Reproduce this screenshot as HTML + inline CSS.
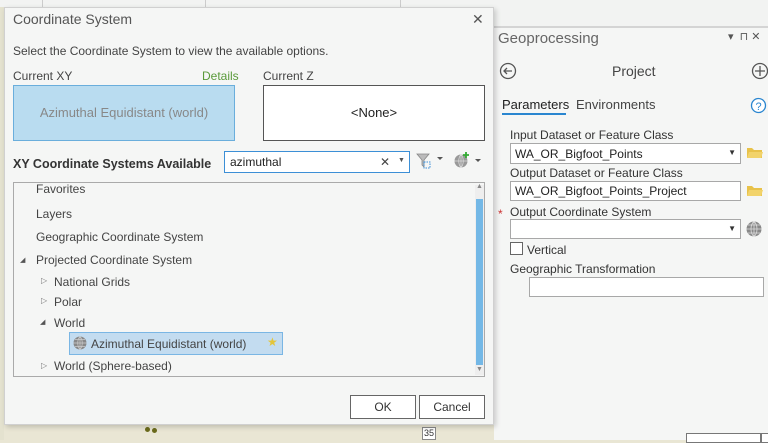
<!DOCTYPE html>
<html><head><meta charset="utf-8"><style>
*{margin:0;padding:0;box-sizing:border-box}
body{width:768px;height:440px;overflow:hidden;position:relative;background:#e9e6d4;font-family:"Liberation Sans",sans-serif;color:#333}
.a{position:absolute;white-space:nowrap}
.f12{font-size:12px}
.box{position:absolute;background:#fff;border:1px solid #a8a8a8}
</style></head><body>
<div class="a" style="left:0;top:0;width:768px;height:27px;background:#f2f3f2"></div>
<div class="a" style="left:42px;top:0;width:1px;height:7px;background:#ccc"></div>
<div class="a" style="left:205px;top:0;width:1px;height:7px;background:#ccc"></div>
<div class="a" style="left:400px;top:0;width:1px;height:7px;background:#ccc"></div>
<div class="a" style="left:0;top:7px;width:4px;height:433px;background:#e4e2cf"></div>
<div class="a" style="left:145px;top:427px;width:5px;height:5px;border-radius:50%;background:#6b6b1c"></div>
<div class="a" style="left:152px;top:428px;width:5px;height:5px;border-radius:50%;background:#6b6b1c"></div>
<div class="a" style="left:422px;top:427px;width:14px;height:13px;background:#fff;border:1px solid #888;font-size:9px;text-align:center">35</div>

<div class="a" style="left:494px;top:26px;width:274px;height:414px;background:#f5f6f5;border-top:2px solid #d4d4d4"></div>
<div class="a" style="left:498px;top:30px;font-size:15px;color:#666">Geoprocessing</div>
<div class="a" style="left:728px;top:30px;font-size:11px;color:#555">▾ &nbsp;⊓ ✕</div>
<svg class="a" style="left:499px;top:62px" width="18" height="18"><circle cx="9" cy="9" r="7.5" fill="none" stroke="#555" stroke-width="1.3"/><path d="M13 9H5M8 6L5 9L8 12" fill="none" stroke="#555" stroke-width="1.3"/></svg>
<div class="a" style="left:612px;top:63px;font-size:14px;color:#444">Project</div>
<svg class="a" style="left:751px;top:62px" width="18" height="18"><circle cx="9" cy="9" r="7.5" fill="none" stroke="#555" stroke-width="1.3"/><path d="M9 4V14M4 9H14" stroke="#555" stroke-width="1.3"/></svg>
<div class="a" style="left:502px;top:97px;font-size:13px;color:#222">Parameters</div>
<div class="a" style="left:502px;top:113px;width:64px;height:2px;background:#2a86d0"></div>
<div class="a" style="left:576px;top:97px;font-size:13px;color:#444">Environments</div>
<svg class="a" style="left:750px;top:97px" width="17" height="17"><circle cx="8.5" cy="8.5" r="7" fill="#fff" stroke="#2a86d0" stroke-width="1.3"/><text x="8.5" y="13" font-size="11" text-anchor="middle" fill="#2a86d0" font-family="Liberation Sans">?</text></svg>
<div class="a f12" style="left:510px;top:128px">Input Dataset or Feature Class</div>
<div class="box" style="left:510px;top:143px;width:231px;height:21px"><span class="a f12" style="left:4px;top:3px;color:#222">WA_OR_Bigfoot_Points</span><span class="a" style="right:4px;top:4px;font-size:8px">▼</span></div>
<svg class="a" style="left:746px;top:145px" width="18" height="14"><path d="M1 3h5l2 2h8v8H1z" fill="#e8c24a"/><path d="M3 7h14l-2 6H1z" fill="#f2d36a"/></svg>
<div class="a f12" style="left:510px;top:166px">Output Dataset or Feature Class</div>
<div class="box" style="left:510px;top:181px;width:231px;height:20px"><span class="a f12" style="left:4px;top:2px;color:#222">WA_OR_Bigfoot_Points_Project</span></div>
<svg class="a" style="left:746px;top:183px" width="18" height="14"><path d="M1 3h5l2 2h8v8H1z" fill="#e8c24a"/><path d="M3 7h14l-2 6H1z" fill="#f2d36a"/></svg>
<div class="a" style="left:498px;top:207px;font-size:12px;color:#c33">*</div>
<div class="a f12" style="left:510px;top:205px">Output Coordinate System</div>
<div class="box" style="left:510px;top:219px;width:231px;height:20px"><span class="a" style="right:4px;top:4px;font-size:8px">▼</span></div>
<svg class="a" style="left:745px;top:220px" width="18" height="18"><circle cx="9" cy="9" r="7.5" fill="#888"/><path d="M1.5 9h15M9 1.5v15M3 5h12M3 13h12M9 1.5c-4 3-4 12 0 15M9 1.5c4 3 4 12 0 15" fill="none" stroke="#ddd" stroke-width="0.8"/></svg>
<div class="a" style="left:510px;top:242px;width:13px;height:13px;background:#fff;border:1px solid #666"></div>
<div class="a f12" style="left:527px;top:243px">Vertical</div>
<div class="a f12" style="left:510px;top:262px">Geographic Transformation</div>
<div class="box" style="left:529px;top:277px;width:235px;height:20px"></div>
<div class="a" style="left:686px;top:433px;width:75px;height:10px;background:#fff;border:1px solid #777"></div>
<div class="a" style="left:761px;top:433px;width:10px;height:10px;background:#fff;border:1px solid #777"></div>

<div class="a" style="left:4px;top:7px;width:490px;height:418px;background:#f5f6f5;border:1px solid #d0d0d0;box-shadow:2px 2px 5px rgba(0,0,0,.18)"></div>
<div class="a" style="left:13px;top:11px;font-size:14px;color:#555">Coordinate System</div>
<div class="a" style="left:472px;top:11px;font-size:14px;color:#555">✕</div>
<div class="a f12" style="left:13px;top:44px;color:#444">Select the Coordinate System to view the available options.</div>
<div class="a f12" style="left:13px;top:69px;color:#444">Current XY</div>
<div class="a f12" style="left:202px;top:69px;color:#5a9a3a">Details</div>
<div class="a f12" style="left:263px;top:69px;color:#444">Current Z</div>
<div class="a" style="left:13px;top:85px;width:222px;height:56px;background:#b9dcf0;border:1px solid #6aaedc;text-align:center;line-height:54px;font-size:13px;color:#888">Azimuthal Equidistant (world)</div>
<div class="a" style="left:263px;top:85px;width:222px;height:56px;background:#fff;border:1.5px solid #555;text-align:center;line-height:54px;font-size:13px;color:#222">&lt;None&gt;</div>
<div class="a" style="left:13px;top:157px;font-size:12.5px;font-weight:bold;color:#333">XY Coordinate Systems Available</div>
<div class="a" style="left:224px;top:151px;width:186px;height:22px;background:#fff;border:1px solid #3c8fd6"><span class="a f12" style="left:5px;top:3px;color:#222">azimuthal</span><span class="a" style="left:155px;top:3px;font-size:12px;color:#444">✕</span><span class="a" style="left:173px;top:5px;font-size:7px;color:#555">▼</span></div>
<svg class="a" style="left:416px;top:152px" width="30" height="18"><path d="M1 2h12l-5 6v7l-2-2V8z" fill="#bbb" stroke="#888" stroke-width=".8"/><rect x="8" y="10" width="6" height="6" fill="none" stroke="#3c8fd6" stroke-dasharray="1.5 1"/><path d="M21 5h6l-3 3z" fill="#555"/></svg>
<svg class="a" style="left:453px;top:151px" width="30" height="18"><circle cx="8" cy="10" r="6.5" fill="#999"/><path d="M1.5 10h13M8 3.5v13M8 3.5c-3 3-3 10 0 13M8 3.5c3 3 3 10 0 13" fill="none" stroke="#ddd" stroke-width=".7"/><path d="M13 1v6M10 4h6" stroke="#3a3" stroke-width="1.8"/><path d="M22 8h6l-3 3z" fill="#555"/></svg>

<div class="a" style="left:13px;top:182px;width:472px;height:195px;background:#f5f6f5;border:1px solid #aaa;overflow:hidden">
 <div class="a" style="left:461px;top:2px;width:9px;height:190px;background:#eee"></div>
 <div class="a" style="left:462px;top:0;font-size:7px;color:#888">▲</div>
 <div class="a" style="left:462px;top:16px;width:7px;height:166px;background:#74b8e6"></div>
 <div class="a" style="left:462px;top:183px;font-size:7px;color:#888">▼</div>
 <div class="a f12" style="left:22px;top:-1px;color:#444">Favorites</div>
 <div class="a f12" style="left:22px;top:24px;color:#444">Layers</div>
 <div class="a f12" style="left:22px;top:47px;color:#444">Geographic Coordinate System</div>
 <div class="a" style="left:6px;top:73px;font-size:7px;color:#555">◢</div>
 <div class="a f12" style="left:22px;top:70px;color:#444">Projected Coordinate System</div>
 <div class="a" style="left:27px;top:93px;font-size:8px;color:#777">▷</div>
 <div class="a f12" style="left:40px;top:92px;color:#444">National Grids</div>
 <div class="a" style="left:27px;top:113px;font-size:8px;color:#777">▷</div>
 <div class="a f12" style="left:40px;top:112px;color:#444">Polar</div>
 <div class="a" style="left:26px;top:135px;font-size:7px;color:#555">◢</div>
 <div class="a f12" style="left:40px;top:133px;color:#444">World</div>
 <div class="a" style="left:55px;top:149px;width:214px;height:23px;background:#c3dcf0;border:1px solid #7ab6e4"></div>
 <svg class="a" style="left:58px;top:152px" width="16" height="16"><circle cx="8" cy="8" r="6.5" fill="#888"/><path d="M1.5 8h13M8 1.5v13M3 4.5h10M3 11.5h10M8 1.5c-3 3-3 10 0 13M8 1.5c3 3 3 10 0 13" fill="none" stroke="#ccc" stroke-width=".7"/></svg>
 <div class="a f12" style="left:77px;top:154px;color:#444">Azimuthal Equidistant (world)</div>
 <div class="a" style="left:253px;top:152px;font-size:12px;color:#e3c53a">★</div>
 <div class="a" style="left:27px;top:178px;font-size:8px;color:#777">▷</div>
 <div class="a f12" style="left:40px;top:176px;color:#444">World (Sphere-based)</div>
</div>
<div class="a" style="left:350px;top:395px;width:66px;height:24px;background:#fff;border:1px solid #666;text-align:center;line-height:22px;font-size:12px;color:#333">OK</div>
<div class="a" style="left:419px;top:395px;width:66px;height:24px;background:#fff;border:1px solid #666;text-align:center;line-height:22px;font-size:12px;color:#333">Cancel</div>
</body></html>
